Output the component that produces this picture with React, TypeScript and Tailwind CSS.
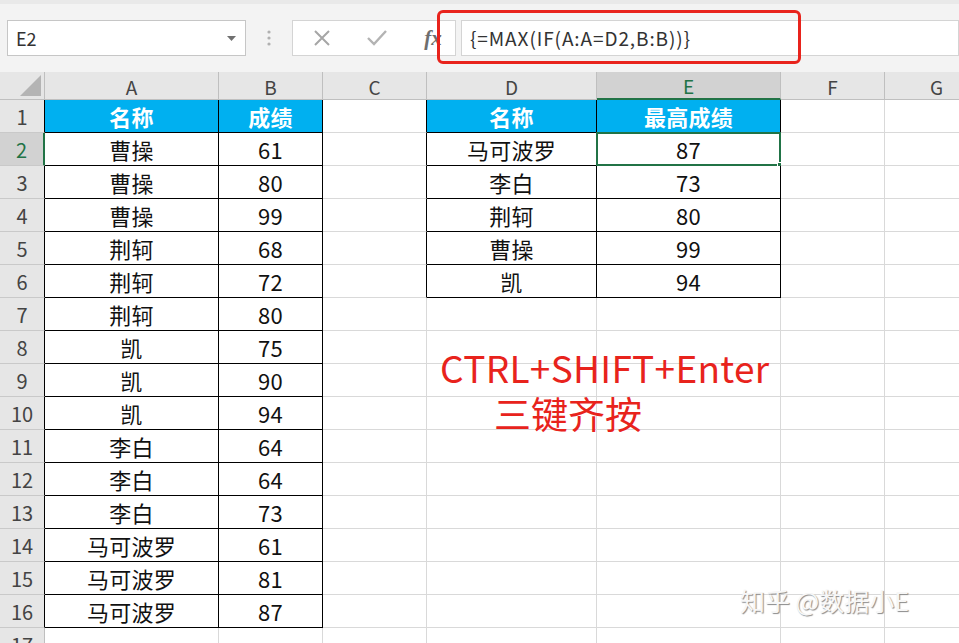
import React from "react";

const FONT = "font-['Noto_Sans_CJK_SC','Noto_Sans',sans-serif]";

type Cell = { text: string; head?: boolean } | null;

const leftTable: [string, string][] = [
  ["名称", "成绩"],
  ["曹操", "61"],
  ["曹操", "80"],
  ["曹操", "99"],
  ["荆轲", "68"],
  ["荆轲", "72"],
  ["荆轲", "80"],
  ["凯", "75"],
  ["凯", "90"],
  ["凯", "94"],
  ["李白", "64"],
  ["李白", "64"],
  ["李白", "73"],
  ["马可波罗", "61"],
  ["马可波罗", "81"],
  ["马可波罗", "87"],
];

const rightTable: [string, string][] = [
  ["名称", "最高成绩"],
  ["马可波罗", "87"],
  ["李白", "73"],
  ["荆轲", "80"],
  ["曹操", "99"],
  ["凯", "94"],
];

const letters = ["A", "B", "C", "D", "E", "F", "G"];

function inTable(r: number, c: number) {
  if ((c === 0 || c === 1) && r >= 1 && r <= 16) return true;
  if ((c === 3 || c === 4) && r >= 1 && r <= 6) return true;
  return false;
}

function getCell(r: number, c: number): Cell {
  if ((c === 0 || c === 1) && r >= 1 && r <= 16)
    return { text: leftTable[r - 1][c], head: r === 1 };
  if ((c === 3 || c === 4) && r >= 1 && r <= 6)
    return { text: rightTable[r - 1][c - 3], head: r === 1 };
  return null;
}

function XIcon() {
  return (
    <svg width="20" height="20" viewBox="0 0 20 20">
      <path d="M3 3 L17 17 M17 3 L3 17" stroke="#a6a6a6" strokeWidth="2" fill="none" />
    </svg>
  );
}

function CheckIcon() {
  return (
    <svg width="22" height="20" viewBox="0 0 22 20">
      <path d="M2 10 L8 16 L20 3" stroke="#b3b3b3" strokeWidth="2.4" fill="none" />
    </svg>
  );
}

export default function App() {
  const rows = Array.from({ length: 17 }, (_, i) => i + 1);
  return (
    <div className={`relative w-[959px] h-[643px] overflow-hidden bg-white ${FONT}`}>
      {/* Formula bar area */}
      <div className="h-[72px] bg-[#f3f3f3] border-t-[4px] border-t-[#e9e9e9] flex items-start pt-[16px] pl-[7px]">
        <div className="w-[239px] h-[36px] bg-white border border-[#c6c6c6] flex items-center justify-between pl-[8px] pr-[9px]">
          <span className="text-[18px] text-[#333]">E2</span>
          <svg width="9" height="5" viewBox="0 0 9 5">
            <path d="M0 0 L9 0 L4.5 5 Z" fill="#707070" />
          </svg>
        </div>
        <div className="w-[46px] h-[36px] flex items-center justify-center">
          <svg width="4" height="18" viewBox="0 0 4 18">
            <circle cx="2" cy="3" r="1.6" fill="#b0b0b0" />
            <circle cx="2" cy="9" r="1.6" fill="#b0b0b0" />
            <circle cx="2" cy="15" r="1.6" fill="#b0b0b0" />
          </svg>
        </div>
        <div className="w-[164px] h-[36px] bg-white border border-[#d4d4d4] flex items-center">
          <div className="w-[56px] flex justify-center pl-[2px]">
            <XIcon />
          </div>
          <div className="w-[56px] flex justify-center">
            <CheckIcon />
          </div>
          <div className="flex-1 flex justify-center pl-[6px]">
            <span className="font-['Liberation_Serif',serif] italic font-bold text-[21px] text-[#6e6e6e] leading-none">
              fx
            </span>
          </div>
        </div>
        <div className="ml-[5px] flex-1 h-[36px] bg-white border border-[#d4d4d4] flex items-center pl-[8px]">
          <span className="text-[19px] text-[#333] tracking-[0.9px]">{"{=MAX(IF(A:A=D2,B:B))}"}</span>
        </div>
      </div>

      {/* Sheet grid */}
      <div className="grid grid-cols-[45px_174px_104px_104px_170px_184px_104px_104px] grid-rows-[28px_repeat(17,33px)]">
        <div className="bg-[#e6e6e6] border-r border-b border-[#bfbfbf] relative">
          <svg className="absolute right-[3px] bottom-[3px]" width="21" height="21" viewBox="0 0 21 21">
            <path d="M21 0 L21 21 L0 21 Z" fill="#b4b4b4" />
          </svg>
        </div>
        {letters.map((l, i) =>
          i === 4 ? (
            <div
              key={l}
              className="bg-[#d2d2d2] border-r border-r-[#bfbfbf] border-b-2 border-b-[#217346] flex items-center justify-center pt-[3px] text-[19px] text-[#217346]"
            >
              {l}
            </div>
          ) : (
            <div
              key={l}
              className="bg-[#e6e6e6] border-r border-b border-[#bfbfbf] flex items-center justify-center pt-[3px] text-[19px] text-[#444]"
            >
              {l}
            </div>
          )
        )}

        {rows.map((r) => (
          <React.Fragment key={r}>
            {r === 2 ? (
              <div className="bg-[#d2d2d2] border-b border-b-[#c9c9c9] border-r-2 border-r-[#217346] flex items-center justify-center pt-[2px] text-[20px] text-[#217346]">
                {r}
              </div>
            ) : (
              <div
                className={
                  r <= 16
                    ? "bg-[#e6e6e6] border-b border-b-[#c9c9c9] border-r border-r-black flex items-center justify-center pt-[2px] text-[20px] text-[#444]"
                    : "bg-[#e6e6e6] border-b border-b-[#c9c9c9] border-r border-r-[#bfbfbf] flex items-center justify-center pt-[2px] text-[20px] text-[#444]"
                }
              >
                {r}
              </div>
            )}
            {letters.map((_, c) => {
              const cell = getCell(r, c);
              const rightBlack = inTable(r, c) || inTable(r, c + 1);
              const bottomBlack = inTable(r, c) || inTable(r + 1, c);
              const rCls = rightBlack ? "border-r-black" : "border-r-[#d9d9d9]";
              const bCls = bottomBlack ? "border-b-black" : "border-b-[#d9d9d9]";
              const bg = cell?.head ? "bg-[#00b0f0] text-white font-bold" : "bg-white text-[#111]";
              const selected = r === 2 && c === 4;
              return (
                <div
                  key={c}
                  className={`relative border-r border-b ${rCls} ${bCls} ${bg} flex items-center justify-center text-[22px] leading-none`}
                >
                  {cell ? <span className="tracking-[0.3px]">{cell.text}</span> : null}
                  {selected ? (
                    <>
                      <div className="absolute left-[-1px] top-[-1px] right-[-1px] bottom-[-1px] border-2 border-[#217346]" />
                      <div className="absolute right-[-4px] bottom-[-4px] w-[7px] h-[7px] bg-[#217346] border border-white" />
                    </>
                  ) : null}
                </div>
              );
            })}
          </React.Fragment>
        ))}
      </div>

      <div className="absolute left-[440px] top-[10px] w-[364px] h-[54px] -translate-x-[3px] border-[3px] border-[#e8231c] rounded-[6px]" />

      <div className="absolute left-[440px] top-[344px] flex flex-col text-[#e8231c] text-[37px] leading-[46px] whitespace-nowrap">
        <span className="tracking-[0.3px]">CTRL+SHIFT+Enter</span>
        <span className="pl-[54px]">三键齐按</span>
      </div>

      <div className="absolute left-[740px] top-[588px] text-[25px] leading-none whitespace-nowrap text-[#f7f7f7] [text-shadow:1px_1px_1px_#8a8a8a]">
        知乎 @数据小E
      </div>
    </div>
  );
}
